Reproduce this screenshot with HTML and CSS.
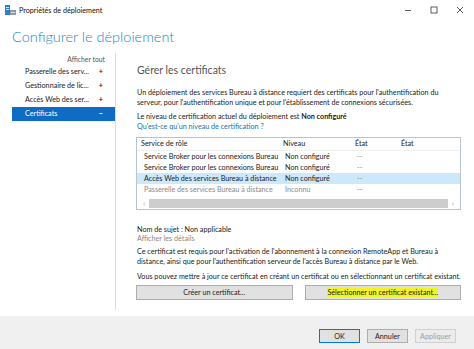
FILE: index.html
```html
<!DOCTYPE html>
<html lang="fr">
<head>
    <meta charset="UTF-8">
    <meta name="viewport" content="width=device-width, initial-scale=1.0">
    <title>Propriétés de déploiement</title>
    <link rel="stylesheet" href="styles.css">
</head>
<body>
    <div class="window">
        <div class="titlebar">
            <svg class="app-icon" width="11" height="10" viewBox="0 0 11 10">
                <rect x="0" y="0" width="5" height="10" fill="#2f7fc8"/>
                <rect x="1" y="2" width="3" height="1" fill="#cfe3f5"/>
                <rect x="1" y="4" width="3" height="1" fill="#cfe3f5"/>
                <rect x="5" y="5" width="6" height="5" fill="#8a99a8"/>
                <rect x="6" y="7" width="4" height="1" fill="#dde3e8"/>
            </svg>
            <span class="title">Propriétés de déploiement</span>
            <div class="controls">
                <span class="ctrl"><svg width="8" height="8" viewBox="0 0 8 8"><path d="M1 4.5h6" stroke="#333" stroke-width="0.8"/></svg></span>
                <span class="ctrl"><svg width="8" height="8" viewBox="0 0 8 8"><rect x="1" y="1" width="6" height="6" fill="none" stroke="#333" stroke-width="0.8"/></svg></span>
                <span class="ctrl"><svg width="8" height="8" viewBox="0 0 8 8"><path d="M1 1l6 6M7 1l-6 6" stroke="#333" stroke-width="0.8"/></svg></span>
            </div>
        </div>

        <h1 class="heading">Configurer le déploiement</h1>

        <div class="main">
            <div class="nav">
                <div class="show-all">Afficher tout</div>
                <div class="nav-item"><span>Passerelle des serv...</span><span class="sign">+</span></div>
                <div class="nav-item"><span>Gestionnaire de lic...</span><span class="sign">+</span></div>
                <div class="nav-item"><span>Accès Web des ser...</span><span class="sign">+</span></div>
                <div class="nav-item active"><span>Certificats</span><span class="sign">−</span></div>
            </div>

            <div class="content">
                <h2>Gérer les certificats</h2>
                <p class="intro">Un déploiement des services Bureau à distance requiert des certificats pour l'authentification du serveur, pour l'authentification unique et pour l'établissement de connexions sécurisées.</p>
                <p class="level">Le niveau de certification actuel du déploiement est <b>Non configuré</b><br>
                    <a href="#" class="link">Qu'est-ce qu'un niveau de certification ?</a></p>

                <div class="table">
                    <div class="row head">
                        <span>Service de rôle</span><span>Niveau</span><span>État</span><span>État</span>
                    </div>
                    <div class="row">
                        <span>Service Broker pour les connexions Bureau</span><span>Non configuré</span><span class="dim">--</span><span></span>
                    </div>
                    <div class="row">
                        <span>Service Broker pour les connexions Bureau</span><span>Non configuré</span><span class="dim">--</span><span></span>
                    </div>
                    <div class="row selected">
                        <span>Accès Web des services Bureau à distance</span><span>Non configuré</span><span class="dim">--</span><span></span>
                    </div>
                    <div class="row disabled">
                        <span>Passerelle des services Bureau à distance</span><span>Inconnu</span><span>--</span><span></span>
                    </div>
                    <div class="scrollbar">
                        <span class="arrow">&lsaquo;</span>
                        <div class="thumb"></div>
                        <span class="arrow">&rsaquo;</span>
                    </div>
                </div>

                <p class="subject">Nom de sujet : Non applicable<br>
                    <span class="muted">Afficher les détails</span></p>
                <p class="info">Ce certificat est requis pour l'activation de l'abonnement à la connexion RemoteApp et Bureau à distance, ainsi que pour l'authentification serveur de l'accès Bureau à distance par le Web.</p>
                <p class="update">Vous pouvez mettre à jour ce certificat en créant un certificat ou en sélectionnant un certificat existant.</p>

                <div class="actions">
                    <button class="btn">Créer un certificat...</button>
                    <button class="btn"><span class="mark">Sélectionner un certificat existant...</span></button>
                </div>
            </div>
        </div>

        <div class="footer">
            <button class="btn small default">OK</button>
            <button class="btn small">Annuler</button>
            <button class="btn small" disabled>Appliquer</button>
        </div>
    </div>
</body>
</html>
```

FILE: styles.css
```css
body {
    margin: 0;
    font-family: 'Lato', 'Open Sans', sans-serif;
    font-size: 7.2px;
    color: #222;
    background: #fff;
}
.window {
    height: 349px;
    display: flex;
    flex-direction: column;
    overflow: hidden;
}
.titlebar {
    height: 20px;
    display: flex;
    align-items: center;
    padding-left: 5px;
    padding-right: 1px;
}
.app-icon {
    margin-right: 3px;
}
.title {
    font-size: 7.2px;
    color: #111;
    flex: 1;
}
.controls {
    display: flex;
}
.ctrl {
    width: 26px;
    display: flex;
    justify-content: center;
}
.heading {
    margin: 6px 0 0 12px;
    font-size: 14.5px;
    font-weight: 300;
    line-height: 22px;
    color: #2c86bd;
}
.main {
    flex: 1;
    display: flex;
    padding-top: 2px;
}
.nav {
    width: 103px;
    margin: 3px 0 6px 12px;
    border-right: 1px solid #dcdcdc;
}
.show-all {
    text-align: right;
    padding-right: 10px;
    line-height: 12px;
    color: #555;
    font-size: 6.8px;
}
.nav-item {
    display: flex;
    justify-content: space-between;
    line-height: 14px;
    padding: 0 12px 0 13px;
    color: #222;
}
.nav-item .sign {
    font-weight: bold;
}
.nav-item.active {
    background: #0f6cc4;
    color: #fff;
}
.content {
    flex: 1;
    padding: 0 13px 0 20px;
}
h2 {
    margin: 13px 0 0 1px;
    font-size: 10.5px;
    font-weight: normal;
    line-height: 14px;
    color: #555;
}
p {
    margin: 0 0 0 1px;
    line-height: 10px;
}
.intro {
    margin-top: 11px;
}
.level {
    margin-top: 4px;
}
.link {
    color: #1a6fb3;
    text-decoration: none;
}
.table {
    margin-top: 5px;
    border: 1px solid #b8c4cf;
}
.row {
    display: grid;
    grid-template-columns: 145px 72px 46px 1fr;
    height: 11px;
    line-height: 11px;
    white-space: nowrap;
}
.row span {
    padding-left: 3px;
    overflow: hidden;
}
.row span:first-child {
    padding-left: 7px;
}
.row.head {
    height: 12px;
    line-height: 12px;
    border-bottom: 1px solid #eef0f2;
}
.row.head span {
    padding-left: 1px;
}
.row.head span:first-child {
    padding-left: 4px;
}
.row.selected {
    background: #cde8fb;
}
.row.disabled {
    color: #8a8a8a;
}
.dim {
    color: #8a8a8a;
}
.scrollbar {
    display: flex;
    align-items: center;
    height: 12px;
    margin-top: 2px;
    padding: 0 2px;
}
.arrow {
    width: 10px;
    text-align: center;
    color: #999;
    font-size: 8px;
}
.thumb {
    flex: 1;
    height: 9px;
    background: #cdcdcd;
}
.subject {
    margin-top: 15px;
    line-height: 9px;
}
.muted {
    color: #888;
}
.info {
    margin-top: 4px;
    line-height: 9.5px;
}
.update {
    margin-top: 6px;
}
.actions {
    display: flex;
    gap: 12px;
    margin-top: 3px;
}
.btn {
    flex: 1;
    height: 15px;
    padding: 0;
    font-family: inherit;
    font-size: 7.2px;
    color: #222;
    background: #e1e1e1;
    border: 1px solid #adadad;
}
.mark {
    background: #f2f224;
}
.footer {
    height: 33px;
    box-sizing: border-box;
    background: #f0f0f0;
    display: flex;
    justify-content: flex-end;
    align-items: flex-start;
    gap: 7px;
    padding: 13px 18px 0 0;
}
.btn.small {
    flex: none;
    width: 41px;
    height: 14px;
}
.btn.default {
    border-color: #0078d7;
}
.btn:disabled {
    color: #a0a0a0;
    background: #ececec;
    border-color: #d0d0d0;
}
```
